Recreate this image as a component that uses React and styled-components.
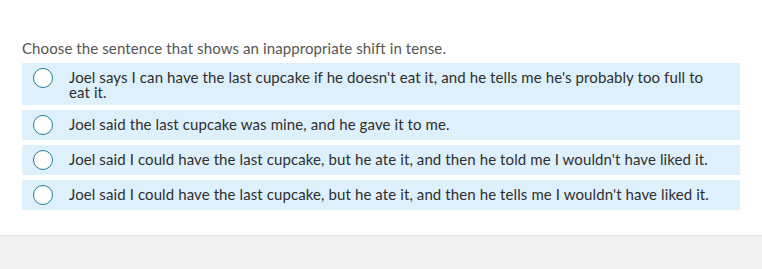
import React from "react"
import styled, { createGlobalStyle } from "styled-components"

const GlobalStyle = createGlobalStyle`
  html, body {
    margin: 0;
    padding: 0;
    background: #ffffff;
  }
  body {
    font-family: Lato, "Open Sans", sans-serif;
  }
`

const options = [
  "Joel says I can have the last cupcake if he doesn't eat it, and he tells me he's probably too full to eat it.",
  "Joel said the last cupcake was mine, and he gave it to me.",
  "Joel said I could have the last cupcake, but he ate it, and then he told me I wouldn't have liked it.",
  "Joel said I could have the last cupcake, but he ate it, and then he tells me I wouldn't have liked it.",
]

const Page = styled.div`
  display: flex;
  flex-direction: column;
  height: 269px;
`

const Question = styled.section`
  flex: 1;
  padding: 38px 22px 0 22px;
`

const Prompt = styled.p`
  margin: 0 0 5px 0;
  font-size: 15px;
  line-height: 20px;
  letter-spacing: 0.1px;
  color: #555555;
  width: 718px;
`

const OptionList = styled.div`
  display: flex;
  flex-direction: column;
  gap: 5px;
  width: 718px;
`

const Option = styled.label`
  display: flex;
  align-items: flex-start;
  gap: 16px;
  padding: 5px 30px 5px 11px;
  background: #dff0fd;
  cursor: pointer;
`

const Radio = styled.span`
  flex: none;
  width: 20px;
  height: 20px;
  box-sizing: border-box;
  border-radius: 50%;
  border: 1.5px solid #1d7f8e;
  background: #ffffff;
`

const OptionText = styled.span`
  font-size: 15px;
  line-height: 15px;
  letter-spacing: 0.1px;
  padding-top: 2px;
  color: #2e2e2e;
`

const Footer = styled.div`
  height: 33px;
  border-top: 1px solid #e2e2e2;
  background: #f2f2f2;
`

const App = () => {
  return (
    <Page>
      <GlobalStyle />
      <Question>
        <Prompt>Choose the sentence that shows an inappropriate shift in tense.</Prompt>
        <OptionList>
          {options.map((text) => (
            <Option key={text}>
              <Radio />
              <OptionText>{text}</OptionText>
            </Option>
          ))}
        </OptionList>
      </Question>
      <Footer />
    </Page>
  )
}

export default App
